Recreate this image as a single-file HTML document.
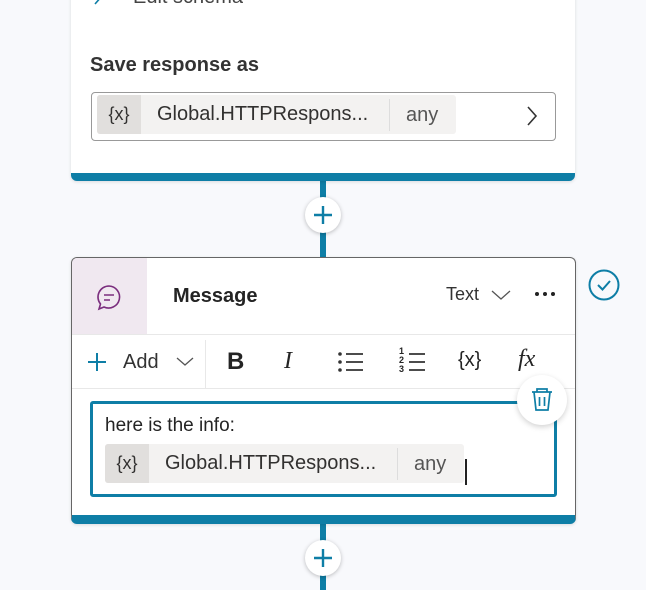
<!DOCTYPE html>
<html><head><style>
*{margin:0;padding:0;box-sizing:border-box}
body{width:646px;height:583px;overflow:hidden;background:#f8f9fc;font-family:"Segoe UI","Liberation Sans",sans-serif;color:#242424;position:relative}
.a{position:absolute}
.card{background:#fff;border-radius:6px;box-shadow:0 1px 3px rgba(0,0,0,.12)}
.chip{background:#f3f2f1;border-radius:3px;height:39px;display:flex;align-items:center;font-size:20px;color:#323130}
.chip .v{background:#e1dfdd;width:44px;height:100%;display:flex;align-items:center;justify-content:center;font-size:18px;border-radius:3px 0 0 3px}
.line{background:#0e7ea6;width:6px}
.plus{width:36px;height:36px;border-radius:50%;background:#fff;box-shadow:0 1px 4px rgba(0,0,0,.25)}
</style></head><body>
<div class="a line" style="left:320px;top:175px;height:90px"></div>
<div class="a line" style="left:320px;top:520px;height:70px"></div>
<div class="a card" style="left:71px;top:-10px;width:504px;height:191px;border-bottom:8px solid #0e7ea6;border-radius:0 0 6px 6px"></div>
<svg class="a" style="left:92px;top:-6px" width="20" height="14"><path d="M3 10 L10 2" stroke="#0e7ea6" stroke-width="1.6" fill="none"/></svg>
<div class="a" style="left:133px;top:-13px;font-size:20px;line-height:20px;color:#444">Edit schema</div>
<div class="a" style="left:90px;top:54px;font-size:20px;font-weight:600;color:#333">Save response as</div>
<div class="a" style="left:91px;top:92px;width:465px;height:49px;border:1px solid #999;border-radius:4px;background:#fff"></div>
<div class="a chip" style="left:97px;top:95px;width:359px"><div class="v">{x}</div><div style="width:248px;padding-left:16px">Global.HTTPRespons...</div><div style="border-left:1px solid #ddd;height:32px;padding-left:16px;line-height:32px;color:#555">any</div></div>
<svg class="a" style="left:524px;top:104px" width="16" height="24"><path d="M4 3 L12 12 L4 21" stroke="#333" stroke-width="1.6" fill="none"/></svg>
<div class="a plus" style="left:305px;top:197px"><svg width="36" height="36"><path d="M9 18H27M18 9V27" stroke="#0e7ea6" stroke-width="2.4"/></svg></div>

<div class="a card" style="left:71px;top:257px;width:505px;height:267px;border:1px solid #666;border-bottom:9px solid #0e7ea6;overflow:hidden">
 <div class="a" style="left:0;top:0;width:75px;height:76px;background:#f0e8f0"></div>
 <svg class="a" style="left:22px;top:24px" width="30" height="30"><path d="M15 4a11 11 0 1 1-5 21l-5 2 1.5-5A11 11 0 0 1 15 4z" fill="none" stroke="#7b2e7e" stroke-width="1.6"/><path d="M10 13h10M10 18h6" stroke="#7b2e7e" stroke-width="1.6"/></svg>
 <div class="a" style="left:101px;top:27px;font-size:20px;font-weight:600;color:#242424">Message</div>
 <div class="a" style="left:374px;top:26px;font-size:18px;color:#333">Text</div>
 <svg class="a" style="left:418px;top:30px" width="22" height="14"><path d="M2 3L11 11L20 3" stroke="#555" stroke-width="1.3" fill="none"/></svg>
 <svg class="a" style="left:462px;top:32px" width="24" height="8"><g fill="#222"><circle cx="3" cy="4" r="2"/><circle cx="11" cy="4" r="2"/><circle cx="19" cy="4" r="2"/></g></svg>
 <div class="a" style="left:0;top:76px;width:505px;height:1px;background:#e8e8e8"></div>
 <svg class="a" style="left:14px;top:93px" width="22" height="22"><path d="M2 11H20M11 2V20" stroke="#0e7ea6" stroke-width="2"/></svg>
 <div class="a" style="left:51px;top:93px;font-size:20px;color:#333">Add</div>
 <svg class="a" style="left:103px;top:97px" width="20" height="14"><path d="M2 3L10 10L18 3" stroke="#555" stroke-width="1.3" fill="none"/></svg>
 <div class="a" style="left:133px;top:82px;width:1px;height:48px;background:#e8e8e8"></div>
 <div class="a" style="left:155px;top:90px;font-size:24px;font-weight:bold">B</div>
 <div class="a" style="left:212px;top:90px;font-size:24px;font-family:'Liberation Serif',serif;font-style:italic">I</div>
 <svg class="a" style="left:265px;top:92px" width="30" height="24"><g fill="#333"><circle cx="3" cy="4" r="1.8"/><circle cx="3" cy="12" r="1.8"/><circle cx="3" cy="20" r="1.8"/></g><path d="M9 4H26M9 12H26M9 20H26" stroke="#333" stroke-width="1.8"/></svg>
 <div class="a" style="left:327px;top:89px;font-size:9px;line-height:9px;font-weight:bold">1<br>2<br>3</div>
 <svg class="a" style="left:336px;top:92px" width="20" height="24"><path d="M1 4H17M1 12H17M1 20H17" stroke="#333" stroke-width="1.8"/></svg>
 <div class="a" style="left:386px;top:91px;font-size:20px">{x}</div>
 <div class="a" style="left:446px;top:88px;font-size:24px;font-family:'Liberation Serif',serif;font-style:italic">fx</div>
 <div class="a" style="left:0;top:130px;width:505px;height:1px;background:#e8e8e8"></div>
 <div class="a" style="left:18px;top:143px;width:467px;height:96px;border:3px solid #0e7ea6;border-radius:3px"></div>
 <div class="a" style="left:33px;top:157px;font-size:19px;color:#242424">here is the info:</div>
 <div class="a chip" style="left:33px;top:186px;width:359px"><div class="v">{x}</div><div style="width:248px;padding-left:16px">Global.HTTPRespons...</div><div style="border-left:1px solid #ddd;height:32px;padding-left:16px;line-height:32px;color:#555">any</div></div>
 <div class="a" style="left:393px;top:201px;width:2px;height:26px;background:#222"></div>
</div>
<div class="a" style="left:517px;top:375px;width:50px;height:50px;border-radius:50%;background:#fff;box-shadow:0 2px 6px rgba(0,0,0,.18)"><svg width="50" height="50"><path d="M15 17H35M20 17V14h10v3M17 17l2 18h12l2-18M22.5 22v9M27.5 22v9" stroke="#0e7ea6" stroke-width="1.7" fill="none"/></svg></div>
<svg class="a" style="left:587px;top:269px" width="34" height="34"><circle cx="17" cy="16" r="14.5" stroke="#0e7ea6" stroke-width="2" fill="none"/><path d="M11 16l4.5 4.5L23 12" stroke="#0e7ea6" stroke-width="2" fill="none"/></svg>
<div class="a plus" style="left:305px;top:540px"><svg width="36" height="36"><path d="M9 18H27M18 9V27" stroke="#0e7ea6" stroke-width="2.4"/></svg></div>
</body></html>
